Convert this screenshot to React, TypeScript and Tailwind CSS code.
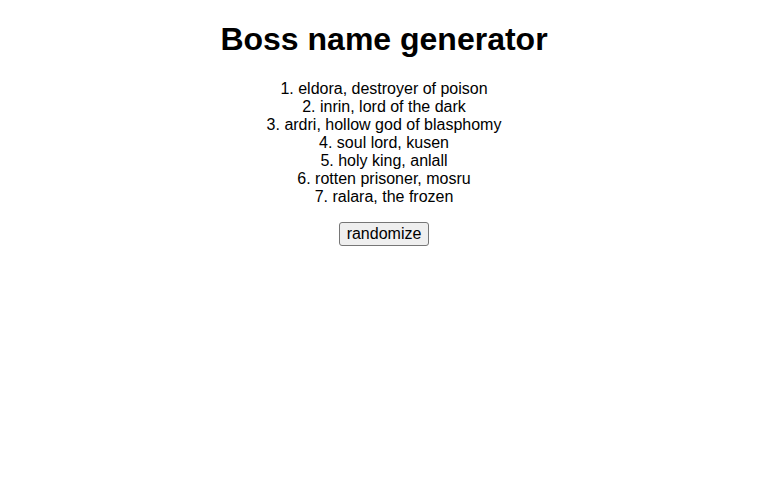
import React, { useState } from "react";

const firstNames = ["eldora", "inrin", "ardri", "kusen", "anlall", "mosru", "ralara", "velka", "thorn", "ismar"];

const initialBosses = [
  "eldora, destroyer of poison",
  "inrin, lord of the dark",
  "ardri, hollow god of blasphomy",
  "soul lord, kusen",
  "holy king, anlall",
  "rotten prisoner, mosru",
  "ralara, the frozen",
];

const titles = ["destroyer of poison", "lord of the dark", "hollow god of blasphomy", "the frozen", "the burning", "keeper of bones"];

function randomBoss() {
  const name = firstNames[Math.floor(Math.random() * firstNames.length)];
  const title = titles[Math.floor(Math.random() * titles.length)];
  return `${name}, ${title}`;
}

export default function App() {
  const [bosses, setBosses] = useState(initialBosses);

  return (
    <div className="min-h-screen bg-white text-black text-center font-['Liberation_Sans',Arial,sans-serif]">
      <h1 className="pt-[21px] text-[32px] font-bold leading-[37px]">Boss name generator</h1>
      <div className="mt-[22px] text-base leading-[18px]">
        {bosses.map((b, i) => (
          <div key={i}>
            {i + 1}. {b}
          </div>
        ))}
      </div>
      <button
        onClick={() => setBosses(bosses.map(() => randomBoss()))}
        className="mt-[16px] rounded-[3px] border border-[#767676] bg-[#efefef] px-[7px] py-[2px] text-base leading-[18px] text-black"
      >
        randomize
      </button>
    </div>
  );
}
